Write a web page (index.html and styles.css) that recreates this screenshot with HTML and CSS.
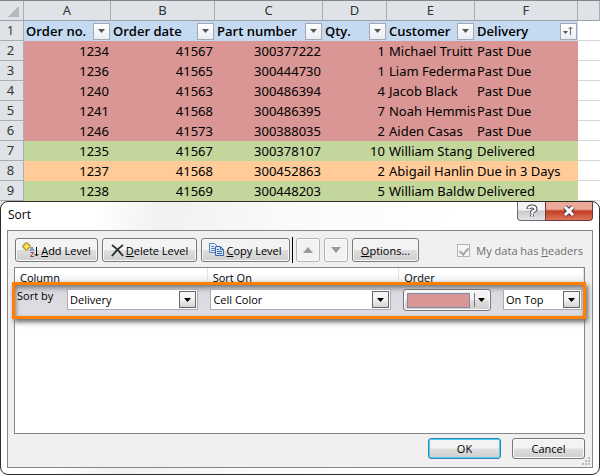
FILE: index.html
```html
<!DOCTYPE html>
<html lang="en">

<head>
    <meta charset="utf-8">
    <meta name="viewport" content="width=device-width, initial-scale=1.0">
    <title>Sort</title>
    <link rel="stylesheet" href="styles.css">
</head>

<body>
    <table class="sheet">
        <colgroup>
            <col class="col_nr">
            <col class="col_a">
            <col class="col_b">
            <col class="col_c">
            <col class="col_d">
            <col class="col_e">
            <col class="col_f">
            <col>
        </colgroup>
        <thead>
            <tr class="letters">
                <th class="corner"><svg width="24" height="19" viewBox="0 0 24 19"><path d="M19 5v11H8z" fill="#b4b8bd"/></svg></th>
                <th>A</th>
                <th>B</th>
                <th>C</th>
                <th>D</th>
                <th>E</th>
                <th>F</th>
                <th></th>
            </tr>
            <tr class="titles">
                <th class="nr">1</th>
                <th><div class="title">Order no. <button class="filter" aria-label="Filter order no."><svg width="7" height="4"><path d="M0 0h7L3.500 4z" fill="#555"/></svg></button></div></th>
                <th><div class="title">Order date <button class="filter" aria-label="Filter order date"><svg width="7" height="4"><path d="M0 0h7L3.500 4z" fill="#555"/></svg></button></div></th>
                <th><div class="title">Part number <button class="filter" aria-label="Filter part number"><svg width="7" height="4"><path d="M0 0h7L3.500 4z" fill="#555"/></svg></button></div></th>
                <th><div class="title">Qty. <button class="filter" aria-label="Filter qty."><svg width="7" height="4"><path d="M0 0h7L3.500 4z" fill="#555"/></svg></button></div></th>
                <th><div class="title">Customer <button class="filter" aria-label="Filter customer"><svg width="7" height="4"><path d="M0 0h7L3.500 4z" fill="#555"/></svg></button></div></th>
                <th><div class="title">Delivery <button class="filter" aria-label="Filter delivery"><svg width="10" height="10"><path d="M0 5h5L2.500 8z" fill="#555"/><path d="M7.500 9V1M5.500 3l2-2 2 2" fill="none" stroke="#666"/></svg></button></div></th>
                <td class="blank"></td>
            </tr>
        </thead>
        <tbody>
            <tr class="red"><th class="nr">2</th><td>1234</td><td>41567</td><td>300377222</td><td>1</td><td class="text">Michael Truitt</td><td class="text">Past Due</td><td class="blank"></td></tr>
            <tr class="red"><th class="nr">3</th><td>1236</td><td>41565</td><td>300444730</td><td>1</td><td class="text">Liam Federma</td><td class="text">Past Due</td><td class="blank"></td></tr>
            <tr class="red"><th class="nr">4</th><td>1240</td><td>41563</td><td>300486394</td><td>4</td><td class="text">Jacob Black</td><td class="text">Past Due</td><td class="blank"></td></tr>
            <tr class="red"><th class="nr">5</th><td>1241</td><td>41568</td><td>300486395</td><td>7</td><td class="text">Noah Hemmis</td><td class="text">Past Due</td><td class="blank"></td></tr>
            <tr class="red"><th class="nr">6</th><td>1246</td><td>41573</td><td>300388035</td><td>2</td><td class="text">Aiden Casas</td><td class="text">Past Due</td><td class="blank"></td></tr>
            <tr class="green"><th class="nr">7</th><td>1235</td><td>41567</td><td>300378107</td><td>10</td><td class="text">William Stang</td><td class="text">Delivered</td><td class="blank"></td></tr>
            <tr class="orange"><th class="nr">8</th><td>1237</td><td>41568</td><td>300452863</td><td>2</td><td class="text">Abigail Hanlin</td><td class="text">Due in 3 Days</td><td class="blank"></td></tr>
            <tr class="green"><th class="nr">9</th><td>1238</td><td>41569</td><td>300448203</td><td>5</td><td class="text">William Baldw</td><td class="text">Delivered</td><td class="blank"></td></tr>
        </tbody>
    </table>

    <div class="behind">
        <section class="dialog" role="dialog" aria-labelledby="sort_title">
            <header class="dialog_top">
                <h2 id="sort_title">Sort</h2>
                <div class="window_buttons">
                    <button class="help" aria-label="Help"><svg width="12" height="14" viewBox="0 0 12 14"><path d="M2.500 5Q2.500 2.500 6 2.500T9.500 5Q9.500 6.500 7.500 7T6 9M6 10.500v2" fill="none" stroke="#4a4e5c" stroke-width="4"/><path d="M2.500 4.500Q3 2.500 6 2.500T9.500 5Q9.500 6.500 7.500 7T6 9M6 10.500v2" fill="none" stroke="#fff" stroke-width="2"/></svg></button>
                    <button class="close" aria-label="Close"><svg width="14" height="12" viewBox="0 0 14 12"><path d="M3 2l8 8M11 2l-8 8" stroke="#4c3a48" stroke-width="5"/><path d="M3 2l8 8M11 2l-8 8" stroke="#fff" stroke-width="3"/></svg></button>
                </div>
            </header>

            <form class="panel">
                <div class="toolbar">
                    <button type="button" class="btn add">
                        <svg width="17" height="16" viewBox="0 0 17 16"><path d="M3 1h3v2h2v3H6v2H3V6H1V3h2z" fill="#ffe36a" stroke="#a58713"/><path d="M8 9l2-4 2 4M9 8h2" fill="none" stroke="#4a72b8"/><path d="M8.500 10.500h3l-3 4h3.500" fill="none" stroke="#a33d4c"/><path d="M14.500 5v9M12.500 12l2 2 2-2" fill="none" stroke="#111"/></svg>
                        <span><u>A</u>dd Level</span>
                    </button>
                    <button type="button" class="btn delete">
                        <svg width="13" height="13" viewBox="0 0 13 13"><path d="M1 1q6 4 11 11M12 1Q6 5 1 12" fill="none" stroke="#333" stroke-width="2"/></svg>
                        <span><u>D</u>elete Level</span>
                    </button>
                    <button type="button" class="btn copy">
                        <svg width="15" height="14" viewBox="0 0 15 14"><path d="M.5.5h5l3 3v6h-8z" fill="#e6f0fd" stroke="#5581c0"/><path d="M2 3.500h3M2 5.500h4M2 7.500h4" stroke="#5581c0"/><path d="M6.500 3.500h5l3 3v6h-8z" fill="#d2e4fb" stroke="#3c65a8"/><path d="M11.500 3.500v3h3M8 6.500h2M8 8.500h5M8 10.500h5" fill="none" stroke="#3c65a8"/></svg>
                        <span><u>C</u>opy Level</span>
                    </button>
                    <span class="divider"></span>
                    <button type="button" class="btn arrow" aria-label="Move up" disabled><svg width="10" height="6"><path d="M0 6l5-6 5 6z" fill="#9b9b9b"/></svg></button>
                    <button type="button" class="btn arrow" aria-label="Move down" disabled><svg width="10" height="6"><path d="M0 0l5 6 5-6z" fill="#9b9b9b"/></svg></button>
                    <button type="button" class="btn options"><span><u>O</u>ptions...</span></button>
                    <label class="headers">
                        <input type="checkbox" checked disabled>
                        <span>My data has <u>h</u>eaders</span>
                    </label>
                </div>

                <div class="levels">
                    <div class="levels_head">
                        <span>Column</span>
                        <span>Sort On</span>
                        <span>Order</span>
                    </div>
                    <div class="level">
                        <label for="sort_by">Sort by</label>
                        <div class="combo">
                            <select id="sort_by"><option>Delivery</option></select>
                            <span class="drop"><svg width="7" height="4"><path d="M0 0h7L3.500 4z"/></svg></span>
                        </div>
                        <div class="combo">
                            <select aria-label="Sort On"><option>Cell Color</option></select>
                            <span class="drop"><svg width="7" height="4"><path d="M0 0h7L3.500 4z"/></svg></span>
                        </div>
                        <button type="button" class="btn color" aria-label="Order color">
                            <span class="swatch"></span>
                            <span class="color_drop"><svg width="7" height="4"><path d="M0 0h7L3.500 4z"/></svg></span>
                        </button>
                        <div class="combo">
                            <select aria-label="Order"><option>On Top</option></select>
                            <span class="drop"><svg width="7" height="4"><path d="M0 0h7L3.500 4z"/></svg></span>
                        </div>
                    </div>
                </div>

                <footer class="actions">
                    <button type="button" class="btn ok">OK</button>
                    <button type="button" class="btn">Cancel</button>
                    <svg class="grip" width="8" height="8"><path d="M6 0h2v2H6zM3 3h2v2H3zM6 3h2v2H6zM0 6h2v2H0zM3 6h2v2H3zM6 6h2v2H6z" fill="#bcbcbc"/></svg>
                </footer>
            </form>
        </section>
    </div>
</body></html>
```
FILE: styles.css
```css
* {
    box-sizing: border-box;
}

body {
    margin: 0;
    background-color: #ffffff;
    color: #000000;
    font-family: "Open Sans", "Noto Sans", sans-serif;
    font-size: 11px;
}

svg {
    display: block;
    flex-shrink: 0;
}

button,
select {
    margin: 0;
    padding: 0;
    color: inherit;
    font: inherit;
}

/* sheet */

.sheet {
    width: 100%;
    table-layout: fixed;
    border-collapse: separate;
    border-spacing: 0;
    border-top: 1px solid #85878a;
    font-family: "Noto Sans", sans-serif;
    font-size: 13px;
    line-height: 19px;
}

.col_nr {
    width: 4%;
}

.col_a {
    width: 14.5%;
}

.col_b {
    width: 17.333%;
}

.col_c {
    width: 18%;
}

.col_d {
    width: 10.667%;
}

.col_e {
    width: 14.667%;
}

.col_f {
    width: 17.167%;
}

.sheet th,
.sheet td {
    height: 20px;
    padding: 0 2px;
    overflow: hidden;
    white-space: nowrap;
    text-align: right;
}

.sheet .letters th {
    padding: 0;
    background-color: #dfe3e8;
    border-right: 1px solid #a8adb4;
    border-bottom: 1px solid #9ba0a8;
    color: #333333;
    font-weight: normal;
    text-align: center;
}

.sheet .nr {
    padding: 0 2px 0 0;
    background-color: #dfe3e8;
    border-right: 1px solid #a8adb4;
    border-bottom: 1px solid #a8adb4;
    color: #333333;
    font-weight: normal;
    text-align: center;
}

.titles th {
    background-color: #c5d9f1;
    font-family: "Open Sans", "Noto Sans", sans-serif;
    font-weight: 600;
}

.title {
    display: flex;
    align-items: center;
    justify-content: space-between;
}

.filter {
    display: flex;
    align-items: center;
    justify-content: center;
    flex-shrink: 0;
    width: 17px;
    height: 17px;
    margin-right: -1px;
    background: linear-gradient(#ffffff, #e9edf3);
    border: 1px solid #a3a9b2;
}

.sheet .text {
    padding: 0 0 0 2px;
    text-align: left;
    text-overflow: clip;
}

.sheet .blank {
    background-color: #ffffff;
    border-bottom: 1px solid #d5d7da;
}

.red {
    background-color: #d99694;
}

.green {
    background-color: #c3d69b;
}

.orange {
    background-color: #ffcc99;
}

/* dialog */

.behind {
    background: linear-gradient(90deg, #dfe3e8 4%, #ffcc99 4%, #ffcc99 96%, #ffffff 96%) no-repeat;
    background-size: 100% 10px;
}

.dialog {
    padding: 0 6px 6px;
    background: linear-gradient(100deg, #ffffff 15%, #f1f1f1 25%, #fafafa 45%, #ffffff 70%);
    border: 1px solid #2c2c2c;
    border-radius: 8px;
}

.dialog_top {
    display: flex;
    align-items: flex-start;
    justify-content: space-between;
    height: 28px;
}

.dialog h2 {
    margin: 0;
    padding: 4px 1px;
    font-size: 12px;
    font-weight: normal;
    line-height: 18px;
}

.window_buttons {
    display: flex;
}

.window_buttons button {
    display: flex;
    align-items: center;
    justify-content: center;
    height: 19px;
    border: 1px solid #6b6d72;
    border-top: 0;
}

.help {
    width: 29px;
    background: linear-gradient(#f2f2f2 45%, #c9cacd 50%, #e4e5e7);
    border-radius: 0 0 0 4px;
}

.window_buttons .close {
    width: 48px;
    margin-left: -1px;
    background: linear-gradient(#eca99a 40%, #c33d25 50%, #dd7558);
    border-color: #6c3a36;
    border-radius: 0 0 4px 0;
}

.panel {
    padding: 7px 7px 8px 6px;
    background-color: #f0f0f0;
    border: 1px solid #868686;
}

.toolbar {
    display: flex;
    align-items: center;
    gap: 4px;
    padding-left: 1px;
}

.btn {
    display: flex;
    align-items: center;
    justify-content: center;
    gap: 2px;
    height: 24px;
    background: linear-gradient(#f3f3f3 48%, #dedede 52%, #cfcfcf);
    border: 1px solid #777777;
    border-radius: 3px;
    box-shadow: inset 0 0 0 1px #fafafa;
    white-space: nowrap;
}

.add {
    width: 83px;
}

.delete {
    width: 95px;
}

.copy {
    width: 89px;
}

.divider {
    width: 1px;
    height: 26px;
    margin: -1px -1px -1px -2px;
    background-color: #000000;
}

.arrow {
    width: 24px;
    background: #f2f2f2;
    border-color: #b3b3b3;
}

.options {
    width: 67px;
}

.headers {
    display: flex;
    align-items: center;
    gap: 6px;
    margin-left: auto;
    padding-right: 2px;
    color: #6d6d6d;
}

.headers input {
    appearance: none;
    width: 13px;
    height: 13px;
    margin: 0;
    background-color: #f6f6f6;
    border: 1px solid #b4b4b4;
}

.headers input:checked::before {
    content: "";
    display: block;
    width: 4px;
    height: 7px;
    margin: 1px 3px;
    border: solid #a5a5a5;
    border-width: 0 2px 2px 0;
    transform: rotate(40deg);
}

.levels {
    min-height: 167px;
    margin-top: 5px;
    background-color: #ffffff;
    border: 1px solid #828790;
}

.levels_head {
    display: grid;
    grid-template-columns: 193fr 192fr 185fr;
    height: 14px;
    background: linear-gradient(#ffffff 40%, #eeeff1);
    line-height: 20px;
}

.levels_head span {
    padding-left: 5px;
    border-right: 1px solid #e1e2e5;
}

.level {
    position: relative;
    display: grid;
    grid-template-columns: 38px 131fr 180fr 88px 79px;
    gap: 12px;
    height: 37px;
    margin: 0 -2px 0 -3px;
    padding: 4px 1px 0 2px;
    background: linear-gradient(#b5b5ba, #d9d9df 8px, #dedee4);
    border: 3px solid #ff8000;
    box-shadow: 2px 3px 5px #666666, inset 1px 2px 4px #77777c;
}

.level label {
    line-height: 14px;
    white-space: nowrap;
}

.combo {
    display: grid;
    height: 21px;
}

.combo select {
    grid-area: 1 / 1;
    appearance: none;
    width: 100%;
    padding: 0 20px 0 2px;
    background-color: #ffffff;
    border: 1px solid #abadb3;
    border-radius: 0;
}

.drop {
    grid-area: 1 / 1;
    justify-self: end;
    align-self: center;
    display: flex;
    align-items: center;
    justify-content: center;
    width: 17px;
    height: 17px;
    margin-right: 2px;
    background: linear-gradient(#f5f5f5 45%, #d3d3d3);
    border: 1px solid #666666;
    pointer-events: none;
}

.color {
    justify-content: flex-start;
    gap: 4px;
    height: 22px;
    padding: 0 3px;
}

.swatch {
    width: 63px;
    height: 15px;
    background-color: #d99694;
    border: 1px solid #7b8ba8;
}

.color_drop {
    display: flex;
    align-items: center;
    height: 14px;
    padding-left: 3px;
    border-left: 1px solid #777777;
}

.actions {
    display: flex;
    justify-content: flex-end;
    gap: 11px;
    position: relative;
    margin-top: 4px;
}

.actions .btn {
    width: 73px;
    height: 21px;
}

.actions .ok {
    border-color: #3c7fb1;
    box-shadow: inset 0 0 0 1px #46d1f5;
}

.grip {
    position: absolute;
    right: -5px;
    bottom: -6px;
}
```
